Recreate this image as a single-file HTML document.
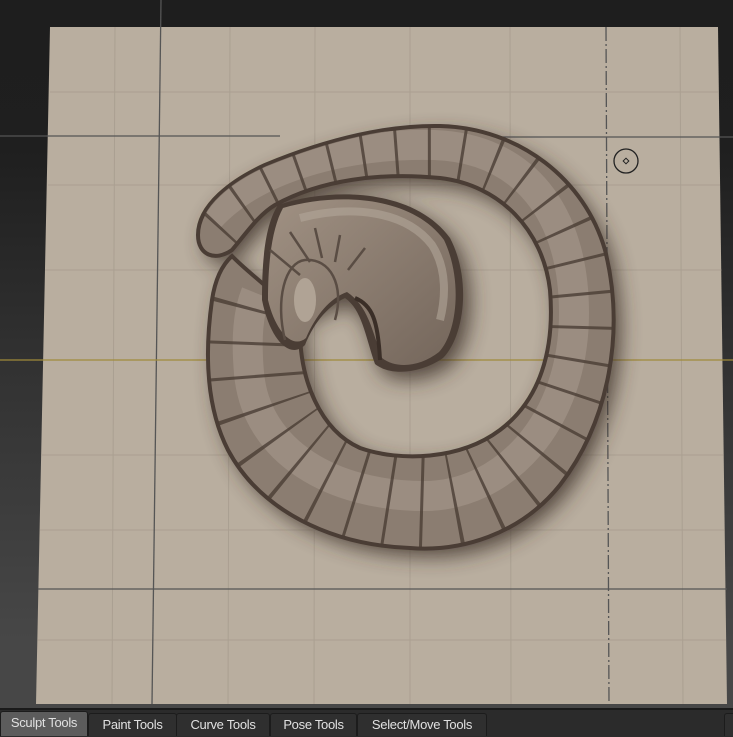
<!DOCTYPE html>
<html><head><meta charset="utf-8"><style>
html,body{margin:0;padding:0;width:733px;height:735px;overflow:hidden;background:linear-gradient(#1e1e1e 0,#1f1f1f 150px,#333 380px,#474747 640px);font-family:"Liberation Sans",sans-serif}
svg{position:absolute;left:0;top:0}
.bar{position:absolute;left:0;top:708px;width:733px;height:27px;background:#2b2b2b;border-top:2px solid #1a1a1a}
.tab{position:absolute;top:3px;height:22px;line-height:22px;color:#e0e0e0;font-size:13px;text-align:center;background:#2f2f2f;border:1px solid #1c1c1c;border-bottom:none;border-radius:3px 3px 0 0;letter-spacing:-0.3px}
.tab.a{background:#5c5c5c;top:1px;height:24px}
</style></head><body>
<svg width="733" height="735" viewBox="0 0 733 735">
<defs>
<filter id="sh" x="-20%" y="-20%" width="140%" height="140%"><feGaussianBlur stdDeviation="10"/></filter>
<linearGradient id="bg" x1="0" y1="0" x2="1" y2="1"><stop offset="0" stop-color="#a09183"/><stop offset="1" stop-color="#74665b"/></linearGradient>
<path id="ring" d="M198,235 C198,205 232,180 265,165 C330,138 390,125 440,126 C520,128 585,180 605,250 C625,330 610,420 560,485 C520,535 460,552 410,548 C330,545 260,510 228,450 C205,405 205,350 212,300 C215,280 222,265 232,256 C255,280 290,300 300,330 C300,380 320,430 360,448 C400,462 460,460 500,430 C540,400 555,350 550,290 C543,230 500,185 440,178 C380,172 320,180 275,205 C258,215 245,235 232,250 C215,262 198,255 198,235Z"/>
<clipPath id="rc"><use href="#ring"/></clipPath>
</defs>
<polygon points="50,27 718,27 727,704 36,704" fill="#b9ae9f"/>
<g stroke="#8f8678" stroke-width="1" opacity="0.35">
<line x1="115" y1="27" x2="112" y2="704"/><line x1="230" y1="27" x2="228" y2="704"/><line x1="315" y1="27" x2="314" y2="704"/><line x1="410" y1="27" x2="410" y2="704"/><line x1="510" y1="27" x2="511" y2="704"/><line x1="680" y1="27" x2="683" y2="704"/>
<line x1="50" y1="92" x2="718" y2="92"/><line x1="48" y1="185" x2="720" y2="185"/><line x1="45" y1="270" x2="722" y2="270"/><line x1="42" y1="455" x2="724" y2="455"/><line x1="40" y1="530" x2="725" y2="530"/><line x1="37" y1="640" x2="726" y2="640"/>
</g>
<g stroke="#555" stroke-width="1.3">
<line x1="161" y1="0" x2="152" y2="704"/><line x1="0" y1="136" x2="280" y2="136"/><line x1="495" y1="137" x2="733" y2="137"/><line x1="38" y1="589" x2="727" y2="589"/>
<line x1="606" y1="27" x2="609" y2="704" stroke-dasharray="14 3 2 3"/>
</g>
<line x1="0" y1="360" x2="733" y2="360" stroke="#a08a3a" stroke-width="1.2"/>
<circle cx="626" cy="161" r="12" fill="none" stroke="#222" stroke-width="1.3"/>
<rect x="624" y="159" width="4" height="4" transform="rotate(45 626 161)" fill="none" stroke="#222"/>
<g filter="url(#sh)" opacity="0.8" transform="translate(7,8)">
<use href="#ring" fill="#3b2f28"/>
<path d="M278,205 C335,186 415,190 450,238 C472,280 464,337 443,358 C420,374 390,376 375,364 C365,335 362,310 345,298 C315,300 290,330 270,330Z" fill="#3b2f28"/>
</g>
<use href="#ring" fill="#8b7d71" stroke="#4a3d35" stroke-width="4"/>
<g clip-path="url(#rc)" fill="none">
<path d="M215,225 C260,175 350,150 440,152 C530,155 580,220 580,320 C580,430 510,503 430,503 C340,503 262,460 255,380 C252,345 254,320 262,300" stroke="#a99b8e" stroke-width="30" opacity="0.55" transform="translate(-6,-7)"/>
<path d="M215,225 C260,175 350,150 440,152 C530,155 580,220 580,320 C580,430 510,503 430,503 C340,503 262,460 255,380 C252,345 254,320 262,300" stroke="#4a3d35" stroke-opacity="0.8" stroke-width="110" stroke-dasharray="3 30"/>
</g>
<use href="#ring" fill="none" stroke="#4a3d35" stroke-width="3"/>
<path d="M278,205 C335,186 415,190 450,238 C472,280 464,337 443,358 C420,374 390,376 375,364 C365,335 362,310 345,298 C330,305 315,320 305,345 C290,360 270,340 262,300 C262,260 265,225 278,205Z" fill="#4a3d35"/>
<path d="M283,208 C338,192 412,196 444,240 C463,280 457,333 439,352 C420,367 396,369 382,358 C372,330 368,306 347,292 C330,298 316,315 306,338 C292,350 275,330 268,300 C268,262 272,228 283,208Z" fill="url(#bg)"/>
<path d="M300,218 C350,205 405,210 432,245 C448,270 445,300 440,320" fill="none" stroke="#b3a699" stroke-width="8" opacity="0.6"/>
<g fill="none" stroke="#5a4d44" stroke-width="2.5">
<path d="M285,340 C275,300 285,262 305,260 C330,258 345,285 335,320"/>
<path d="M270,250 L300,275 M290,232 L310,262 M315,228 L322,258 M340,235 L335,262 M365,248 L348,270"/>
</g>
<ellipse cx="305" cy="300" rx="11" ry="22" fill="#b0a395"/>
<path d="M355,298 C372,305 378,320 380,360" fill="none" stroke="#3a2e27" stroke-width="4"/>
</svg>
<div class="bar">
<div class="tab a" style="left:0;width:86px">Sculpt Tools</div>
<div class="tab" style="left:88px;width:87px">Paint Tools</div>
<div class="tab" style="left:176px;width:92px">Curve Tools</div>
<div class="tab" style="left:270px;width:85px">Pose Tools</div>
<div class="tab" style="left:357px;width:128px">Select/Move Tools</div>
<div class="tab" style="left:724px;width:20px"></div>
</div>
</body></html>
